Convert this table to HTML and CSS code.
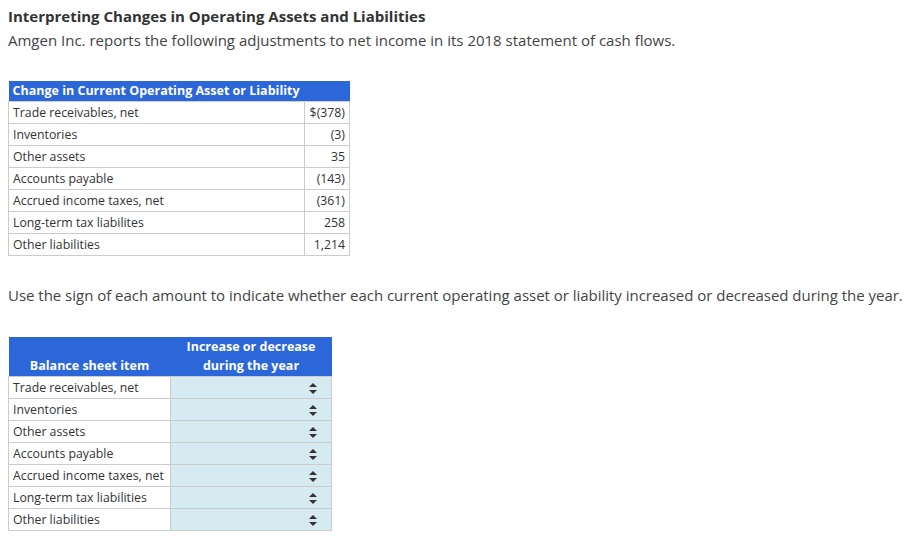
FILE: index.html
```html
<!DOCTYPE html>
<html>
<head>
<meta charset="utf-8">
<link rel="stylesheet" href="styles.css">
</head>
<body>
<h1 class="title">Interpreting Changes in Operating Assets and Liabilities</h1>
<p class="intro">Amgen Inc. reports the following adjustments to net income in its 2018 statement of cash flows.</p>

<table class="data">
  <thead>
    <tr><th colspan="2" class="hd-left">Change in Current Operating Asset or Liability</th></tr>
  </thead>
  <tbody>
    <tr><td class="lbl">Trade receivables, net</td><td class="num">$(378)</td></tr>
    <tr><td class="lbl">Inventories</td><td class="num">(3)</td></tr>
    <tr><td class="lbl">Other assets</td><td class="num">35</td></tr>
    <tr><td class="lbl">Accounts payable</td><td class="num">(143)</td></tr>
    <tr><td class="lbl">Accrued income taxes, net</td><td class="num">(361)</td></tr>
    <tr><td class="lbl">Long-term tax liabilites</td><td class="num">258</td></tr>
    <tr><td class="lbl">Other liabilities</td><td class="num">1,214</td></tr>
  </tbody>
</table>

<p class="instr">Use the sign of each amount to indicate whether each current operating asset or liability increased or decreased during the year.</p>

<table class="answer">
  <thead>
    <tr><th class="hd-item">Balance sheet item</th><th class="hd-chg">Increase or decrease<br>during the year</th></tr>
  </thead>
  <tbody>
    <tr><td class="lbl">Trade receivables, net</td><td class="sel"><span class="arrows"><svg width="8" height="11" viewBox="0 0 8 11"><path d="M4 0L8 4H0Z M0 7H8L4 11Z" fill="#333"/></svg></span></td></tr>
    <tr><td class="lbl">Inventories</td><td class="sel"><span class="arrows"><svg width="8" height="11" viewBox="0 0 8 11"><path d="M4 0L8 4H0Z M0 7H8L4 11Z" fill="#333"/></svg></span></td></tr>
    <tr><td class="lbl">Other assets</td><td class="sel"><span class="arrows"><svg width="8" height="11" viewBox="0 0 8 11"><path d="M4 0L8 4H0Z M0 7H8L4 11Z" fill="#333"/></svg></span></td></tr>
    <tr><td class="lbl">Accounts payable</td><td class="sel"><span class="arrows"><svg width="8" height="11" viewBox="0 0 8 11"><path d="M4 0L8 4H0Z M0 7H8L4 11Z" fill="#333"/></svg></span></td></tr>
    <tr><td class="lbl">Accrued income taxes, net</td><td class="sel"><span class="arrows"><svg width="8" height="11" viewBox="0 0 8 11"><path d="M4 0L8 4H0Z M0 7H8L4 11Z" fill="#333"/></svg></span></td></tr>
    <tr><td class="lbl">Long-term tax liabilities</td><td class="sel"><span class="arrows"><svg width="8" height="11" viewBox="0 0 8 11"><path d="M4 0L8 4H0Z M0 7H8L4 11Z" fill="#333"/></svg></span></td></tr>
    <tr><td class="lbl">Other liabilities</td><td class="sel"><span class="arrows"><svg width="8" height="11" viewBox="0 0 8 11"><path d="M4 0L8 4H0Z M0 7H8L4 11Z" fill="#333"/></svg></span></td></tr>
  </tbody>
</table>
</body>
</html>
```
FILE: styles.css
```css
html, body {
  margin: 0;
  padding: 0;
  background: #fff;
}
body {
  padding: 7px 8px 8px;
  font-family: "Open Sans", "Noto Sans", sans-serif;
  color: #333;
}
.title {
  margin: 0;
  font-size: 15px;
  line-height: 18px;
  font-weight: 700;
  color: #333;
}
.intro {
  margin: 5px 0 0;
  font-size: 15px;
  line-height: 20px;
  color: #444;
}
table {
  border-collapse: collapse;
  font-size: 12.3px;
}
.data {
  margin-top: 31px;
  width: 342px;
}
th {
  background: #2b67d9;
  color: #fff;
  font-weight: 700;
  font-size: 12.5px;
  padding: 0;
}
.hd-left {
  text-align: left;
  height: 20px;
  padding: 0 4px;
  line-height: 20px;
}
td {
  border: 1px solid #ccc;
  height: 21px;
  padding: 0 4px;
  line-height: 20px;
  color: #333;
}
.data .lbl {
  width: 287px;
}
.num {
  text-align: right;
}
.instr {
  margin: 29px 0 0;
  font-size: 15px;
  line-height: 20px;
  color: #444;
  white-space: nowrap;
  letter-spacing: -0.02px;
}
.answer {
  margin-top: 32px;
  width: 324px;
}
.answer th {
  height: 38px;
  line-height: 19px;
  vertical-align: bottom;
  padding: 0 0 1px;
}
.hd-item {
  width: 162px;
}
.answer .lbl {
  width: 153px;
}
.sel {
  background: #d6eaf2;
  text-align: right;
  padding: 0 14px 0 4px;
}
.arrows {
  display: inline-flex;
  vertical-align: middle;
}
```
